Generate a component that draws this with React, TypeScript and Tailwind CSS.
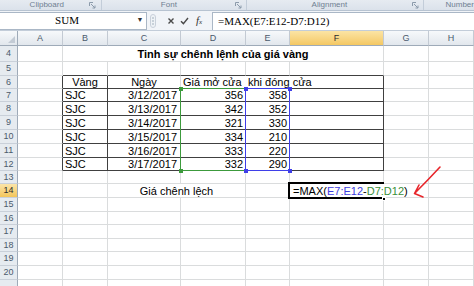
import React from "react";

const R = "border-r-[#dadcdd]";
const B = "border-b-[#dadcdd]";
const RD = "border-r-[#404040]";
const BD = "border-b-[#404040]";
const RN = "border-r-transparent";

const rowHeads = [4, 5, 6, 7, 8, 9, 10, 11, 12, 13, 14, 15, 16, 17, 18, 19, 20];

const table = [
  { date: "3/12/2017", open: 356, close: 358 },
  { date: "3/13/2017", open: 342, close: 352 },
  { date: "3/14/2017", open: 321, close: 330 },
  { date: "3/15/2017", open: 334, close: 210 },
  { date: "3/16/2017", open: 333, close: 220 },
  { date: "3/17/2017", open: 332, close: 290 },
];

function Cell({
  children,
  r = R,
  b = B,
  align = "justify-start",
  valign = "items-end",
  extra = "",
}: {
  children?: React.ReactNode;
  r?: string;
  b?: string;
  align?: string;
  valign?: string;
  extra?: string;
}) {
  return (
    <div
      className={`flex min-w-0 overflow-visible whitespace-nowrap border-r border-b px-[2px] text-[11px] leading-[12px] text-black ${r} ${b} ${align} ${valign} ${extra}`}
    >
      {children}
    </div>
  );
}

function RowHead({ n, active = false }: { n?: number; active?: boolean }) {
  return (
    <div
      className={`flex items-center justify-center border-r border-b border-r-[#9eaab8] border-b-[#c9d0d9] text-[9px] leading-none ${active ? "bg-linear-to-b from-[#fbe5a8] to-[#f3c559] text-[#2d2d2d]" : "bg-[#e6ebf0] text-[#4a5a6c]"}`}
    >
      {n}
    </div>
  );
}

function ColHead({ l, active = false }: { l: string; active?: boolean }) {
  return (
    <div
      className={`flex items-center justify-center border-r border-b border-r-[#c3cad3] border-b-[#9eaab8] text-[9px] leading-none ${active ? "bg-linear-to-b from-[#fbe4a4] to-[#f4c862] text-[#2d2d2d]" : "bg-linear-to-b from-[#f7f9fb] to-[#e2e7ed] text-[#4a5a6c]"}`}
    >
      {l}
    </div>
  );
}

function Launcher() {
  return (
    <svg width="7" height="7" viewBox="0 0 7 7" className="text-[#8c9bab]">
      <path d="M0.5 4V0.5H4" fill="none" stroke="currentColor" strokeWidth="1" />
      <path d="M2 2L6 6M6 3.5V6H3.5" fill="none" stroke="currentColor" strokeWidth="1" />
    </svg>
  );
}

function Blank({ count }: { count: number }) {
  return (
    <>
      {Array.from({ length: count }).map((_, i) => (
        <Cell key={i} />
      ))}
    </>
  );
}

export default function App() {
  return (
    <div className="relative h-[286px] w-[474px] overflow-hidden bg-white font-['Liberation_Sans',Arial,sans-serif]">
      {/* ribbon group labels */}
      <div className="flex h-[11px] border-b border-[#b7c3d1] bg-linear-to-b from-[#e6ebf1] to-[#dbe2eb] text-[8px] leading-[10px] text-[#6f7f91]">
        <div className="flex w-[104px] items-center border-r border-[#c3cdd9] pr-[5px]">
          <span className="flex-1 pl-[4px] text-center">Clipboard</span>
          <Launcher />
        </div>
        <div className="flex w-[147px] items-center border-r border-[#c3cdd9] pr-[4px]">
          <span className="flex-1 text-center">Font</span>
          <Launcher />
        </div>
        <div className="flex w-[179px] items-center border-r border-[#c3cdd9] pr-[4px]">
          <span className="flex-1 text-center">Alignment</span>
          <Launcher />
        </div>
        <div className="flex-1 pl-[22px]">Number</div>
      </div>

      {/* formula bar */}
      <div className="flex h-[20px] items-center border-b border-[#c3cdd9] bg-[#f1f4f8] font-['Liberation_Serif',serif] text-[11px]">
        <div className="flex h-[18px] w-[147px] items-center border border-l-0 border-[#aab7c6] bg-white">
          <span className="flex-1 text-center">SUM</span>
          <span className="w-[12px] text-center font-['Liberation_Sans',sans-serif] text-[7px] text-[#333]">▼</span>
        </div>
        <div className="flex w-[12px] justify-center">
          <svg width="6" height="14" viewBox="0 0 6 14">
            <rect x="0.5" y="0.5" width="5" height="13" rx="2.5" fill="#eef2f6" stroke="#c8d0da" />
            <circle cx="3" cy="4" r="0.8" fill="#9aa6b4" />
            <circle cx="3" cy="7" r="0.8" fill="#9aa6b4" />
            <circle cx="3" cy="10" r="0.8" fill="#9aa6b4" />
          </svg>
        </div>
        <div className="flex w-[53px] items-center pl-[8px]">
          <svg width="8" height="8" viewBox="0 0 8 8">
            <path d="M1.5 1.5L6.5 6.5M6.5 1.5L1.5 6.5" stroke="#4a4a4a" strokeWidth="1.4" />
          </svg>
          <svg width="9" height="8" viewBox="0 0 9 8" className="ml-[5px]">
            <path d="M1 4.2L3.4 6.6L8 1" fill="none" stroke="#4a4a4a" strokeWidth="1.4" />
          </svg>
          <span className="ml-[7px] text-[11px] italic leading-none text-[#333]">
            f<span className="text-[7px]">x</span>
          </span>
        </div>
        <div className="flex h-[18px] flex-1 items-center border-t border-l border-[#aab7c6] bg-white pl-[5px] text-black">
          =MAX(E7:E12-D7:D12)
        </div>
      </div>

      {/* sheet */}
      <div className="grid grid-cols-[18px_45px_45px_73px_65px_44px_94px_45px_1fr] grid-rows-[15px_16px_14px_13px_13px_14px_14px_14px_14px_13px_13px_14px_14px_13px_14px_13px_14px_14px_7px]">
        <div className="relative border-r border-b border-r-[#9eaab8] border-b-[#9eaab8] bg-linear-to-b from-[#f7f9fb] to-[#e2e7ed]">
          <svg width="7" height="7" viewBox="0 0 7 7" className="absolute right-[2px] bottom-[2px]">
            <path d="M7 0V7H0Z" fill="#c3cbd5" />
          </svg>
        </div>
        {["A", "B", "C", "D", "E", "F", "G", "H"].map((l) => (
          <ColHead key={l} l={l} active={l === "F"} />
        ))}

        {/* row 4 */}
        <RowHead n={rowHeads[0]} />
        <Cell />
        <div className="col-span-5 flex items-center justify-center whitespace-nowrap border-r border-b border-r-[#dadcdd] border-b-[#dadcdd] text-[11px] font-bold leading-[12px] text-black">
          Tinh sự chênh lệnh của giá vàng
        </div>
        <Blank count={2} />

        {/* row 5 */}
        <RowHead n={5} />
        <Cell />
        <Cell b={BD} />
        <Cell b={BD} />
        <Cell b={BD} />
        <Cell b={BD} />
        <Cell b={BD} />
        <Blank count={2} />

        {/* row 6 */}
        <RowHead n={6} />
        <Cell r={RD} />
        <Cell r={RD} b={BD} align="justify-center">
          Vàng
        </Cell>
        <Cell b={BD} align="justify-center">
          Ngày
        </Cell>
        <Cell r={RN} b={BD}>
          Giá mở cửa
        </Cell>
        <Cell r={RN} b={BD}>
          khi đóng cửa
        </Cell>
        <Cell r={RD} b={BD} />
        <Blank count={2} />

        {/* rows 7-12 */}
        {table.map((row, i) => (
          <React.Fragment key={row.date}>
            <RowHead n={7 + i} />
            <Cell r={RD} />
            <Cell r={RD} b={BD}>
              SJC
            </Cell>
            <Cell b={BD} align="justify-end" extra="pr-[3px]">
              {row.date}
            </Cell>
            <Cell b={BD} align="justify-end">
              {row.open}
            </Cell>
            <Cell b={BD} align="justify-end">
              {row.close}
            </Cell>
            <Cell r={RD} b={BD} />
            <Blank count={2} />
          </React.Fragment>
        ))}

        {/* row 13 */}
        <RowHead n={13} />
        <Blank count={8} />

        {/* row 14 */}
        <RowHead n={14} active />
        <Cell />
        <Cell />
        <div className="col-span-2 flex items-end justify-center whitespace-nowrap border-r border-b border-r-[#dadcdd] border-b-[#dadcdd] text-[11px] leading-[12px] text-black">
          Giá chênh lệch
        </div>
        <Cell />
        <Cell r={RN} extra="pl-[3px]">
          <span>=MAX(</span>
          <span className="text-[#3d3de0]">E7:E12</span>
          <span>-</span>
          <span className="text-[#3a8f3a]">D7:D12</span>
          <span>)</span>
          <span className="mb-[1px] ml-[1px] h-[11px] w-[1px] bg-black" />
        </Cell>
        <Blank count={2} />

        {/* rows 15-21 */}
        {[15, 16, 17, 18, 19, 20].map((n) => (
          <React.Fragment key={n}>
            <RowHead n={n} />
            <Blank count={8} />
          </React.Fragment>
        ))}
        <RowHead />
        <Blank count={8} />
      </div>

      {/* range highlights */}
      <div className="pointer-events-none absolute top-[88px] left-[180px] h-[83px] w-[66px] border border-[#3c9a3c]" />
      <div className="pointer-events-none absolute top-[88px] left-[245px] h-[83px] w-[45px] border border-[#3f3fe8]" />
      <div className="absolute top-[87px] left-[179px] h-[4px] w-[4px] bg-[#3c9a3c]" />
      <div className="absolute top-[169px] left-[179px] h-[4px] w-[4px] bg-[#3c9a3c]" />
      <div className="absolute top-[87px] left-[244px] h-[4px] w-[4px] bg-[#3f3fe8]" />
      <div className="absolute top-[87px] left-[288px] h-[4px] w-[4px] bg-[#3f3fe8]" />
      <div className="absolute top-[169px] left-[244px] h-[4px] w-[4px] bg-[#3f3fe8]" />
      <div className="absolute top-[169px] left-[288px] h-[4px] w-[4px] bg-[#3f3fe8]" />

      {/* active cell */}
      <div className="pointer-events-none absolute top-[182px] left-[288px] h-[17px] w-[96px] border-2 border-r-0 border-black" />
      <div className="absolute top-[197px] left-[382px] h-[4px] w-[4px] border border-white bg-black" />

      {/* red arrow */}
      <svg
        className="pointer-events-none absolute top-0 left-0"
        width="474"
        height="286"
        viewBox="0 0 474 286"
      >
        <path
          d="M440 167 Q428 180 415 193 M419 185 L414.5 193.5 L423 197"
          fill="none"
          stroke="#e8262b"
          strokeWidth="1.6"
          strokeLinecap="round"
          strokeLinejoin="round"
        />
      </svg>
    </div>
  );
}
